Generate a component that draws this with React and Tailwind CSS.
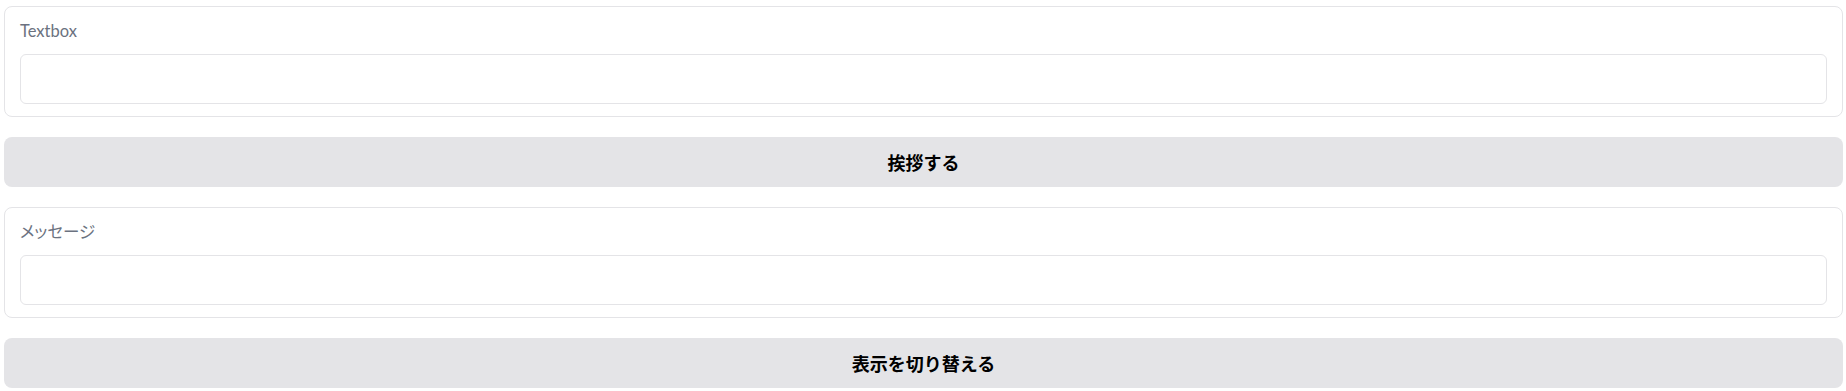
import React from "react";

const jpFont = "font-['Lato','Noto_Sans_CJK_JP',sans-serif]";

function TextField({ label }) {
  return (
    <div className="rounded-[8px] border border-[#e4e4e7] bg-white px-[15px] pt-[12px] pb-[12px]">
      <div className={`h-[24px] text-[16.5px] leading-[24px] text-[#6b7280] ${jpFont} [font-feature-settings:'palt']`}>{label}</div>
      <input
        type="text"
        className="mt-[11px] block h-[50px] w-full rounded-[6px] border border-[#e4e4e7] bg-white px-3 outline-none"
      />
    </div>
  );
}

function Button({ children }) {
  return (
    <button className="flex h-[50px] w-full items-center justify-center rounded-[8px] bg-[#e4e4e7] text-[18px] font-bold text-black font-['Noto_Sans_CJK_JP',sans-serif]">
      {children}
    </button>
  );
}

export default function App() {
  return (
    <div className="flex min-h-[391px] flex-col gap-[20px] bg-white pt-[6px] pl-[4px] pr-[3px]">
      <TextField label="Textbox" />
      <Button>挨拶する</Button>
      <TextField label="メッセージ" />
      <Button>表示を切り替える</Button>
    </div>
  );
}
